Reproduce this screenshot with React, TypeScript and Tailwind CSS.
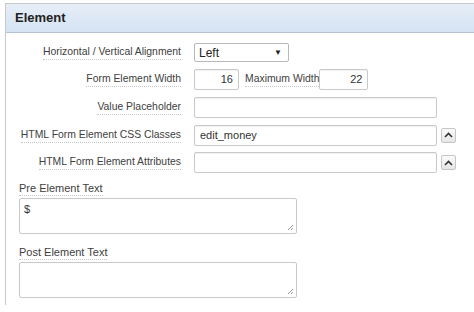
const label = "inline-block whitespace-nowrap text-[10.4px] text-[#404040] border-b border-dotted border-[#c8c8c8] leading-[14px]";
const input = "h-[21px] border border-[#c9c9c9] rounded-[2px] bg-white px-[5px] text-[11px] leading-[19px] text-[#333] shadow-[inset_0_1px_1px_rgba(0,0,0,0.06)]";

const UpButton = () => (
  <div className="ml-[4px] w-[15px] h-[15px] border border-[#c6c6c6] rounded-[2px] bg-gradient-to-b from-[#fbfbfb] to-[#e6e6e6] flex items-center justify-center">
    <svg width="9" height="6" viewBox="0 0 9 6">
      <path d="M1 5 L4.5 1.5 L8 5" fill="none" stroke="#333" strokeWidth="1.6" />
    </svg>
  </div>
);

const Row = ({ text, children, h }: { text: string; children?: React.ReactNode; h: string }) => (
  <div className={`flex items-center ${h}`}>
    <div className="w-[175px] flex justify-end">
      <span className={label}>{text}</span>
    </div>
    <div className="ml-[13px] flex items-center">{children}</div>
  </div>
);

const Resize = () => (
  <svg className="absolute right-[2px] bottom-[2px]" width="8" height="8" viewBox="0 0 8 8">
    <path d="M7 2 L2 7 M7 5 L5 7" stroke="#999" strokeWidth="1" />
  </svg>
);

export default function App() {
  return (
    <div className="w-[474px] h-[312px] bg-white font-['Liberation_Sans',Arial,sans-serif] pt-[3px] pl-[5px]">
      <div className="h-[302px] border-l border-t border-[#c9c9c9]">
        <div className="h-[29px] border-b border-[#b5c3d3] bg-gradient-to-b from-[#e6eef8] to-[#d5e3f2] flex items-center pl-[9px]">
          <span className="text-[13px] font-bold text-[#222]">Element</span>
        </div>
        <div className="pt-[6px]">
          <Row text="Horizontal / Vertical Alignment" h="h-[27px]">
            <div className="w-[95px] h-[19px] border border-[#b8b8b8] rounded-[2px] bg-white flex items-center justify-between px-[4px] text-[12px] text-[#222]">
              <span>Left</span>
              <span className="text-[8px] text-[#222] mr-[2px]">▼</span>
            </div>
          </Row>
          <Row text="Form Element Width" h="h-[27px]">
            <div className={`${input} w-[45px] text-right`}>16</div>
            <span className={`${label} ml-[6px] mr-[0px]`}>Maximum Width</span>
            <div className={`${input} w-[49px] text-right`}>22</div>
          </Row>
          <Row text="Value Placeholder" h="h-[28px]">
            <div className={`${input} w-[243px]`}></div>
          </Row>
          <Row text="HTML Form Element CSS Classes" h="h-[28px]">
            <div className={`${input} w-[243px]`}>edit_money</div>
            <UpButton />
          </Row>
          <Row text="HTML Form Element Attributes" h="h-[27px]">
            <div className={`${input} w-[243px]`}></div>
            <UpButton />
          </Row>
          <div className="pl-[13px] leading-[14px]">
            <div className="mt-[5px] flex">
              <span className={`${label} text-[11px]`}>Pre Element Text</span>
            </div>
            <div className="relative mt-[2px] w-[278px] h-[36px] border border-[#c9c9c9] rounded-[2px] px-[4px] pt-[3px] text-[11px] text-[#333]">
              $
              <Resize />
            </div>
            <div className="mt-[11px] flex">
              <span className={`${label} text-[11px]`}>Post Element Text</span>
            </div>
            <div className="relative mt-[2px] w-[278px] h-[36px] border border-[#c9c9c9] rounded-[2px]">
              <Resize />
            </div>
          </div>
        </div>
      </div>
    </div>
  );
}
